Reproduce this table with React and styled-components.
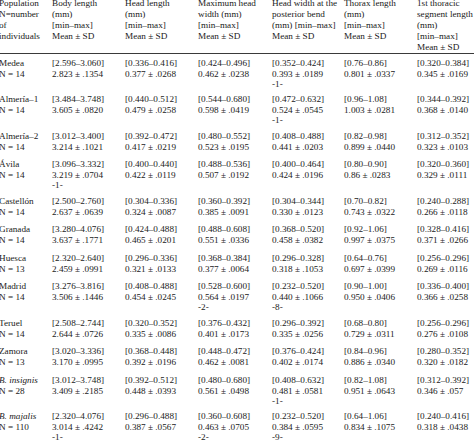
import React from 'react';
import styled, { createGlobalStyle } from 'styled-components';

const GlobalStyle = createGlobalStyle`
  html, body {
    margin: 0;
    padding: 0;
    background: #fff;
    overflow: hidden;
  }
`;

const Page = styled.div`
  width: 474px;
  height: 445px;
  overflow: hidden;
  background: #fff;
`;

const Table = styled.table`
  border-collapse: collapse;
  table-layout: fixed;
  width: 519px;
  margin: -2px 0 0 -1px;
  font-family: 'Liberation Serif', 'Times New Roman', serif;
  font-size: 9.2px;
  line-height: 11px;
  color: #1a1a1a;
`;

const Col = styled.col`
  width: ${(p) => p.$w}px;
`;

const HeadCell = styled.th`
  font-weight: normal;
  text-align: left;
  vertical-align: top;
  white-space: nowrap;
  padding: 0;
  border-bottom: 1px solid #3a3a3a;
`;

const Cell = styled.td`
  vertical-align: top;
  white-space: nowrap;
  padding: 3.5px 0 3px;
`;

const Line = styled.span`
  display: block;
`;

const Note = styled.span`
  display: block;
  line-height: 7px;
  padding-top: 1px;
`;

const Species = styled.em`
  font-style: italic;
`;

const widths = [53, 73, 73, 74, 72, 73, 101];

const headers = [
  ['Population', 'N=number', 'of', 'individuals'],
  ['Body length', '(mm)', '[min–max]', 'Mean ± SD'],
  ['Head length', '(mm)', '[min–max]', 'Mean ± SD'],
  ['Maximum head', 'width (mm)', '[min–max]', 'Mean ± SD'],
  ['Head width at the', 'posterior bend', '(mm) [min–max]', 'Mean ± SD'],
  ['Thorax length', '(mm)', '[min–max]', 'Mean ± SD'],
  ['1st thoracic', 'segment length', '(mm)', '[min–max]', 'Mean ± SD'],
];

const rows = [
  {
    name: 'Medea', n: 14,
    cells: [
      ['[2.596–3.060]', '2.823 ± .1354'],
      ['[0.336–0.416]', '0.377 ± .0268'],
      ['[0.424–0.496]', '0.462 ± .0238'],
      ['[0.352–0.424]', '0.393 ± .0189', '-1-'],
      ['[0.76–0.86]', '0.801 ± .0337'],
      ['[0.320–0.384]', '0.345 ± .0169'],
    ],
  },
  {
    name: 'Almería–1', n: 14,
    cells: [
      ['[3.484–3.748]', '3.605 ± .0820'],
      ['[0.440–0.512]', '0.479 ± .0258'],
      ['[0.544–0.680]', '0.598 ± .0419'],
      ['[0.472–0.632]', '0.524 ± .0545', '-1-'],
      ['[0.96–1.08]', '1.003 ± .0281'],
      ['[0.344–0.392]', '0.368 ± .0140'],
    ],
  },
  {
    name: 'Almería–2', n: 14,
    cells: [
      ['[3.012–3.400]', '3.214 ± .1021'],
      ['[0.392–0.472]', '0.417 ± .0219'],
      ['[0.480–0.552]', '0.523 ± .0195'],
      ['[0.408–0.488]', '0.441 ± .0203'],
      ['[0.82–0.98]', '0.899 ± .0440'],
      ['[0.312–0.352]', '0.323 ± .0103'],
    ],
  },
  {
    name: 'Ávila', n: 14,
    cells: [
      ['[3.096–3.332]', '3.219 ± .0704', '-1-'],
      ['[0.400–0.440]', '0.422 ± .0119'],
      ['[0.488–0.536]', '0.507 ± .0192'],
      ['[0.400–0.464]', '0.424 ± .0196'],
      ['[0.80–0.90]', '0.86 ± .0283'],
      ['[0.320–0.360]', '0.329 ± .0111'],
    ],
  },
  {
    name: 'Castellón', n: 14,
    cells: [
      ['[2.500–2.760]', '2.637 ± .0639'],
      ['[0.304–0.336]', '0.324 ± .0087'],
      ['[0.360–0.392]', '0.385 ± .0091'],
      ['[0.304–0.344]', '0.330 ± .0123'],
      ['[0.70–0.82]', '0.743 ± .0322'],
      ['[0.240–0.288]', '0.266 ± .0118'],
    ],
  },
  {
    name: 'Granada', n: 14,
    cells: [
      ['[3.280–4.076]', '3.637 ± .1771'],
      ['[0.424–0.488]', '0.465 ± .0201'],
      ['[0.488–0.608]', '0.551 ± .0336'],
      ['[0.368–0.520]', '0.458 ± .0382'],
      ['[0.92–1.06]', '0.997 ± .0375'],
      ['[0.328–0.416]', '0.371 ± .0266'],
    ],
  },
  {
    name: 'Huesca', n: 13,
    cells: [
      ['[2.320–2.640]', '2.459 ± .0991'],
      ['[0.296–0.336]', '0.321 ± .0133'],
      ['[0.368–0.384]', '0.377 ± .0064'],
      ['[0.296–0.328]', '0.318 ± .1053'],
      ['[0.64–0.76]', '0.697 ± .0399'],
      ['[0.256–0.296]', '0.269 ± .0116'],
    ],
  },
  {
    name: 'Madrid', n: 14,
    cells: [
      ['[3.276–3.816]', '3.506 ± .1446'],
      ['[0.408–0.488]', '0.454 ± .0245'],
      ['[0.528–0.600]', '0.564 ± .0197', '-2-'],
      ['[0.232–0.520]', '0.440 ± .1066', '-8-'],
      ['[0.90–1.00]', '0.950 ± .0406'],
      ['[0.336–0.400]', '0.366 ± .0258'],
    ],
  },
  {
    name: 'Teruel', n: 14,
    cells: [
      ['[2.508–2.744]', '2.644 ± .0726'],
      ['[0.320–0.352]', '0.335 ± .0086'],
      ['[0.376–0.432]', '0.401 ± .0173'],
      ['[0.296–0.392]', '0.335 ± .0256'],
      ['[0.68–0.80]', '0.729 ± .0311'],
      ['[0.256–0.296]', '0.276 ± .0108'],
    ],
  },
  {
    name: 'Zamora', n: 13,
    cells: [
      ['[3.020–3.336]', '3.170 ± .0995'],
      ['[0.368–0.448]', '0.392 ± .0196'],
      ['[0.448–0.472]', '0.462 ± .0081'],
      ['[0.376–0.424]', '0.402 ± .0174'],
      ['[0.84–0.96]', '0.886 ± .0340'],
      ['[0.280–0.352]', '0.320 ± .0182'],
    ],
  },
  {
    name: 'B. insignis', italic: true, n: 28,
    cells: [
      ['[3.012–3.748]', '3.409 ± .2185'],
      ['[0.392–0.512]', '0.448 ± .0393'],
      ['[0.480–0.680]', '0.561 ± .0498'],
      ['[0.408–0.632]', '0.481 ± .0581', '-1-'],
      ['[0.82–1.08]', '0.951 ± .0643'],
      ['[0.312–0.392]', '0.346 ± .057'],
    ],
  },
  {
    name: 'B. majalis', italic: true, n: 110,
    cells: [
      ['[2.320–4.076]', '3.014 ± .4242', '-1-'],
      ['[0.296–0.488]', '0.387 ± .0567'],
      ['[0.360–0.608]', '0.463 ± .0705', '-2-'],
      ['[0.232–0.520]', '0.384 ± .0595', '-9-'],
      ['[0.64–1.06]', '0.834 ± .1075'],
      ['[0.240–0.416]', '0.318 ± .0438'],
    ],
  },
];

const MeasureCell = ({ range, mean, note }) => (
  <Cell>
    <Line>{range}</Line>
    <Line>{mean}</Line>
    {note && <Note>{note}</Note>}
  </Cell>
);

const App = () => {
  return (
    <Page>
      <GlobalStyle />
      <Table>
        <colgroup>
          {widths.map((w, i) => (
            <Col key={i} $w={w} />
          ))}
        </colgroup>
        <thead>
          <tr>
            {headers.map((lines, i) => (
              <HeadCell key={i}>
                {lines.map((l) => (
                  <Line key={l}>{l}</Line>
                ))}
              </HeadCell>
            ))}
          </tr>
        </thead>
        <tbody>
          {rows.map((row) => (
            <tr key={row.name}>
              <Cell>
                <Line>{row.italic ? <Species>{row.name}</Species> : row.name}</Line>
                <Line>N = {row.n}</Line>
              </Cell>
              {row.cells.map(([range, mean, note], i) => (
                <MeasureCell key={i} range={range} mean={mean} note={note} />
              ))}
            </tr>
          ))}
        </tbody>
      </Table>
    </Page>
  );
};

export default App;
